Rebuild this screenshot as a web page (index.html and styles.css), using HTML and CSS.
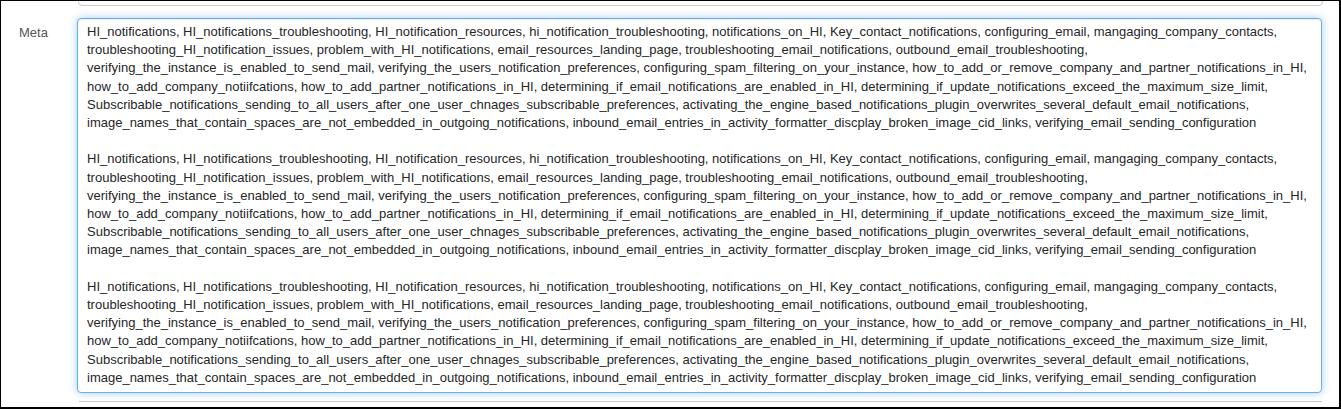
FILE: index.html
```html
<!DOCTYPE html>
<html>
<head>
<meta charset="utf-8">
<link rel="stylesheet" href="styles.css">
</head>
<body>
<div class="frame">
  <div class="prev-field"></div>
  <div class="row">
    <label class="label" for="meta">Meta</label>
    <textarea id="meta" class="meta-input" spellcheck="false">HI_notifications, HI_notifications_troubleshooting, HI_notification_resources, hi_notification_troubleshooting, notifications_on_HI, Key_contact_notifications, configuring_email, mangaging_company_contacts,
troubleshooting_HI_notification_issues, problem_with_HI_notifications, email_resources_landing_page, troubleshooting_email_notifications, outbound_email_troubleshooting,
verifying_the_instance_is_enabled_to_send_mail, verifying_the_users_notification_preferences, configuring_spam_filtering_on_your_instance, how_to_add_or_remove_company_and_partner_notifications_in_HI,
how_to_add_company_notiifcations, how_to_add_partner_notifications_in_HI, determining_if_email_notifications_are_enabled_in_HI, determining_if_update_notifications_exceed_the_maximum_size_limit,
Subscribable_notifications_sending_to_all_users_after_one_user_chnages_subscribable_preferences, activating_the_engine_based_notifications_plugin_overwrites_several_default_email_notifications,
image_names_that_contain_spaces_are_not_embedded_in_outgoing_notifications, inbound_email_entries_in_activity_formatter_discplay_broken_image_cid_links, verifying_email_sending_configuration

HI_notifications, HI_notifications_troubleshooting, HI_notification_resources, hi_notification_troubleshooting, notifications_on_HI, Key_contact_notifications, configuring_email, mangaging_company_contacts,
troubleshooting_HI_notification_issues, problem_with_HI_notifications, email_resources_landing_page, troubleshooting_email_notifications, outbound_email_troubleshooting,
verifying_the_instance_is_enabled_to_send_mail, verifying_the_users_notification_preferences, configuring_spam_filtering_on_your_instance, how_to_add_or_remove_company_and_partner_notifications_in_HI,
how_to_add_company_notiifcations, how_to_add_partner_notifications_in_HI, determining_if_email_notifications_are_enabled_in_HI, determining_if_update_notifications_exceed_the_maximum_size_limit,
Subscribable_notifications_sending_to_all_users_after_one_user_chnages_subscribable_preferences, activating_the_engine_based_notifications_plugin_overwrites_several_default_email_notifications,
image_names_that_contain_spaces_are_not_embedded_in_outgoing_notifications, inbound_email_entries_in_activity_formatter_discplay_broken_image_cid_links, verifying_email_sending_configuration

HI_notifications, HI_notifications_troubleshooting, HI_notification_resources, hi_notification_troubleshooting, notifications_on_HI, Key_contact_notifications, configuring_email, mangaging_company_contacts,
troubleshooting_HI_notification_issues, problem_with_HI_notifications, email_resources_landing_page, troubleshooting_email_notifications, outbound_email_troubleshooting,
verifying_the_instance_is_enabled_to_send_mail, verifying_the_users_notification_preferences, configuring_spam_filtering_on_your_instance, how_to_add_or_remove_company_and_partner_notifications_in_HI,
how_to_add_company_notiifcations, how_to_add_partner_notifications_in_HI, determining_if_email_notifications_are_enabled_in_HI, determining_if_update_notifications_exceed_the_maximum_size_limit,
Subscribable_notifications_sending_to_all_users_after_one_user_chnages_subscribable_preferences, activating_the_engine_based_notifications_plugin_overwrites_several_default_email_notifications,
image_names_that_contain_spaces_are_not_embedded_in_outgoing_notifications, inbound_email_entries_in_activity_formatter_discplay_broken_image_cid_links, verifying_email_sending_configuration</textarea>
  </div>
  <div class="next-field"></div>
</div>
</body>
</html>
```

FILE: styles.css
```css
html, body {
  margin: 0;
  padding: 0;
  background: #ffffff;
}

.frame {
  box-sizing: border-box;
  width: 1341px;
  height: 409px;
  border-style: solid;
  border-color: #000000;
  border-width: 1px 2px 2px 1px;
  overflow: hidden;
  font-family: "Liberation Sans", Arial, Helvetica, sans-serif;
  background: #ffffff;
}

.prev-field {
  box-sizing: border-box;
  margin-left: 77px;
  width: 1245px;
  height: 20px;
  margin-top: -15px;
  border: 1px solid #cccccc;
  border-radius: 4px;
}

.row {
  display: flex;
  align-items: flex-start;
  margin-top: 12px;
}

.label {
  box-sizing: border-box;
  width: 76px;
  padding-left: 18px;
  padding-top: 6px;
  font-size: 13px;
  line-height: 18px;
  color: #555555;
}

.meta-input {
  box-sizing: border-box;
  width: 1245px;
  height: 375px;
  margin: 0;
  padding: 4px 9px;
  border: 1px solid #66afe9;
  border-radius: 4px;
  box-shadow: inset 0 1px 1px rgba(0, 0, 0, 0.075), 0 0 8px rgba(102, 175, 233, 0.6);
  outline: none;
  resize: none;
  overflow: hidden;
  white-space: pre;
  font-family: "Liberation Sans", Arial, Helvetica, sans-serif;
  font-size: 13px;
  line-height: 18.2px;
  color: #262626;
  background: #ffffff;
}

.next-field {
  margin-left: 78px;
  margin-top: 8px;
  width: 1243px;
  border-top: 1px solid #cccccc;
}
```
